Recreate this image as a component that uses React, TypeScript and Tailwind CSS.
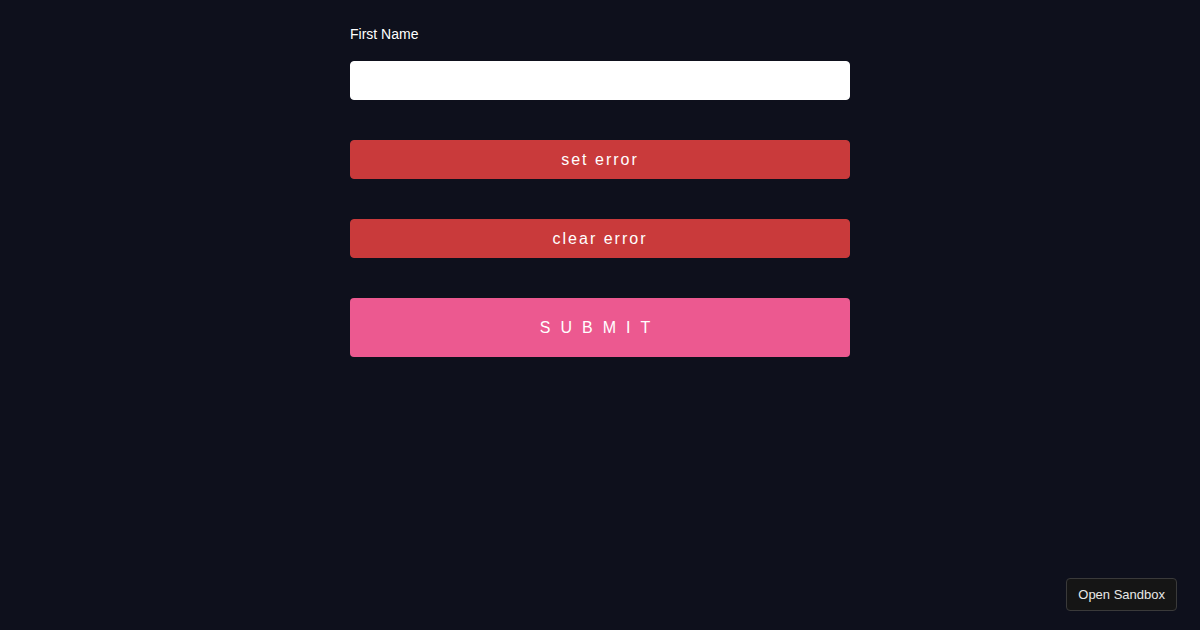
export default function App() {
  return (
    <div className="min-h-[630px] bg-[#0e101c] font-['Liberation_Sans',Arial,sans-serif] text-white">
      <form className="mx-auto w-[500px] pt-5" onSubmit={(e) => e.preventDefault()}>
        <label className="mb-[13px] block text-[14px] leading-[28px]">First Name</label>
        <input
          type="text"
          className="block h-[39px] w-full rounded-[4px] border border-white bg-white px-[15px] text-[14px] text-black outline-none"
        />
        <button
          type="button"
          className="mt-10 block h-[39px] w-full rounded-[4px] border border-[#c93a3b] bg-[#c93a3b] text-[16px] tracking-[2px] text-white"
        >
          set error
        </button>
        <button
          type="button"
          className="mt-10 block h-[39px] w-full rounded-[4px] border border-[#c93a3b] bg-[#c93a3b] text-[16px] tracking-[2px] text-white"
        >
          clear error
        </button>
        <button
          type="submit"
          className="mt-10 block h-[59px] w-full rounded-[4px] bg-[#ec5990] text-[16px] font-thin uppercase tracking-[10px] text-white"
        >
          Submit
        </button>
      </form>

      {/* Sandbox link */}
      <button className="fixed bottom-[19px] right-[23px] h-[33px] rounded-[4px] border border-[#3a3a3a] bg-[#151515] px-[11px] text-[13px] text-[#e8e8e8]">
        Open Sandbox
      </button>
    </div>
  );
}
